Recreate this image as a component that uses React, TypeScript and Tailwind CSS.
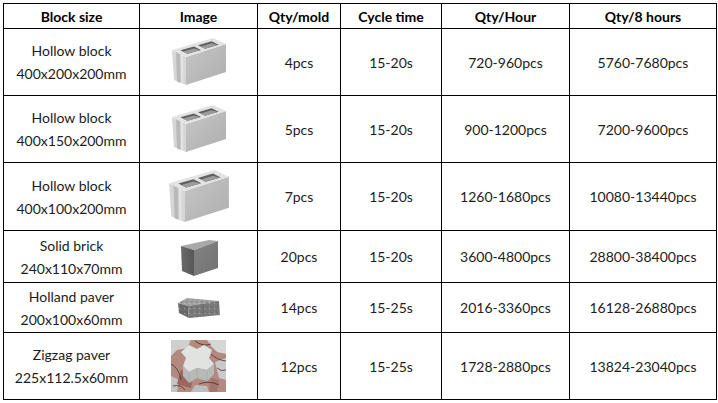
type Row = {
  name: string;
  size: string;
  img: 'hollow' | 'hollowWide' | 'solid' | 'holland' | 'zigzag';
  mold: string;
  cycle: string;
  hour: string;
  eight: string;
};

const rows: Row[] = [
  { name: 'Hollow block', size: '400x200x200mm', img: 'hollow', mold: '4pcs', cycle: '15-20s', hour: '720-960pcs', eight: '5760-7680pcs' },
  { name: 'Hollow block', size: '400x150x200mm', img: 'hollow', mold: '5pcs', cycle: '15-20s', hour: '900-1200pcs', eight: '7200-9600pcs' },
  { name: 'Hollow block', size: '400x100x200mm', img: 'hollowWide', mold: '7pcs', cycle: '15-20s', hour: '1260-1680pcs', eight: '10080-13440pcs' },
  { name: 'Solid brick', size: '240x110x70mm', img: 'solid', mold: '20pcs', cycle: '15-20s', hour: '3600-4800pcs', eight: '28800-38400pcs' },
  { name: 'Holland paver', size: '200x100x60mm', img: 'holland', mold: '14pcs', cycle: '15-25s', hour: '2016-3360pcs', eight: '16128-26880pcs' },
  { name: 'Zigzag paver', size: '225x112.5x60mm', img: 'zigzag', mold: '12pcs', cycle: '15-25s', hour: '1728-2880pcs', eight: '13824-23040pcs' },
];

const headers = ['Block size', 'Image', 'Qty/mold', 'Cycle time', 'Qty/Hour', 'Qty/8 hours'];

function HollowBlock({ w }: { w: number }) {
  return (
    <svg width={w} height={w * 48 / 56} viewBox="0 0 56 48">
      <defs>
        <linearGradient id="hbFront" x1="0" y1="0" x2="1" y2="1">
          <stop offset="0" stopColor="#c6c6c6" />
          <stop offset="1" stopColor="#aeaeae" />
        </linearGradient>
      </defs>
      {/* end face */}
      <polygon points="1,12 15,19 15,47 3,42" fill="#d6d6d6" />
      <polygon points="5,14 9,16 9.5,45 6,43.5" fill="#b9b9b9" />
      <polygon points="10,16.5 12,17.5 12.3,46 10.3,45.3" fill="#e4e4e4" />
      {/* front */}
      <polygon points="15,19 55,6 55,34 15,47" fill="url(#hbFront)" />
      {/* top */}
      <polygon points="1,12 42,0 55,6 15,19" fill="#e3e3e3" />
      <polygon points="9.4,12.3 23,8.4 30,11.9 16.4,15.8" fill="#5e5e5e" />
      <polygon points="12,13.6 23,10.4 29,12.3 16.4,15.8" fill="#9c9c9c" />
      <polygon points="27,7.2 40.6,3.2 47.6,6.7 34,10.7" fill="#5e5e5e" />
      <polygon points="29.6,8.5 40.6,5.2 46.6,7.1 34,10.7" fill="#9c9c9c" />
    </svg>
  );
}

function SolidBrick() {
  return (
    <svg width="40" height="40" viewBox="0 0 40 40">
      <defs>
        <linearGradient id="sbLeft" x1="0" y1="0" x2="1" y2="0">
          <stop offset="0" stopColor="#6a6a6a" />
          <stop offset="1" stopColor="#575757" />
        </linearGradient>
        <linearGradient id="sbFront" x1="0" y1="0" x2="1" y2="1">
          <stop offset="0" stopColor="#838383" />
          <stop offset="1" stopColor="#727272" />
        </linearGradient>
      </defs>
      <polygon points="2,9 30,3 39,4 15,13" fill="#a8a8a8" />
      <polygon points="2,9 15,13 15,39 3,34" fill="url(#sbLeft)" />
      <polygon points="15,13 39,4 39,31 15,39" fill="url(#sbFront)" />
    </svg>
  );
}

function HollandPaver() {
  return (
    <svg width="46" height="24" viewBox="0 0 46 24">
      <defs>
        <pattern id="speck" width="5" height="5" patternUnits="userSpaceOnUse">
          <circle cx="1" cy="1" r="0.5" fill="#3e3e3e" />
          <circle cx="3.5" cy="2.5" r="0.45" fill="#d0d0d0" />
          <circle cx="2" cy="4" r="0.4" fill="#4a4a4a" />
          <circle cx="4.3" cy="0.6" r="0.35" fill="#555" />
        </pattern>
      </defs>
      <polygon points="2,7 11,2 43,5 12,10" fill="#a4a4a4" />
      <polygon points="2,7 12,10 13,22 3,17" fill="#6c6c6c" />
      <polygon points="12,10 43,5 44,19 13,22" fill="#7c7c7c" />
      <polygon points="2,7 11,2 43,5 12,10" fill="url(#speck)" />
      <polygon points="2,7 12,10 13,22 3,17" fill="url(#speck)" />
      <polygon points="12,10 43,5 44,19 13,22" fill="url(#speck)" />
      <line x1="27" y1="7.6" x2="28" y2="20.6" stroke="#555" strokeWidth="0.6" />
    </svg>
  );
}

function ZigzagPhoto() {
  return (
    <svg width="55" height="52" viewBox="0 0 55 52">
      <rect width="55" height="52" fill="#b48a80" />
      <path d="M0 0H20L16 8L6 10L0 16Z" fill="#cfcfcf" />
      <path d="M36 0H55V14L46 12L40 6Z" fill="#d6d6d6" />
      <path d="M44 22L55 18V40L48 38Z" fill="#c9c9c9" />
      <path d="M0 36L8 40L6 52H0Z" fill="#c4c4c4" />
      <path d="M20 52L24 45L36 46L38 52Z" fill="#bdbdbd" />
      <path d="M10 30L22 34L20 48L6 44Z" fill="#9c665c" />
      <path d="M40 38L48 40L46 52H38Z" fill="#a5776c" />
      <path d="M24 1Q32 7 40 4M40 14Q46 20 55 21M0 24Q8 28 10 40M28 44Q38 40 48 45M2 46Q10 44 14 50M46 28Q50 32 55 30" stroke="#4a2e2a" strokeWidth="0.8" fill="none" />
      <path d="M10 12L18 5L26 9L33 5L41 10L38 18L43 24L36 30L26 28L18 32L12 26L15 18Z" fill="#e0e3e0" />
      <path d="M12 26L18 32L26 28L36 30L43 24L43 34L36 41L26 38L18 43L12 36Z" fill="#b7bbb7" />
      <path d="M26 28L26 38M18 32L18 43M36 30L36 41" stroke="#a2a6a2" strokeWidth="0.6" />
    </svg>
  );
}

function Picture({ kind }: { kind: Row['img'] }) {
  if (kind === 'hollow') return <HollowBlock w={56} />;
  if (kind === 'hollowWide') return <HollowBlock w={62} />;
  if (kind === 'solid') return <SolidBrick />;
  if (kind === 'holland') return <HollandPaver />;
  return <ZigzagPhoto />;
}

const cell = 'flex flex-col items-center justify-center border-r border-b border-black text-center';

export default function App() {
  return (
    <div className="w-[718px] h-[403px] bg-white pt-[3px] pl-[3px] font-['Lato',sans-serif] text-[14px] text-[#1c1c1c]">
      <div className="grid grid-cols-[136px_118px_83px_101px_128px_147px] grid-rows-[25px_67px_67px_68px_52px_50px_67px] w-fit border-l border-t border-black">
        {headers.map((h) => (
          <div key={h} className={`${cell} font-bold text-black`}>
            {h}
          </div>
        ))}
        {rows.map((r) => (
          <div key={r.size} className="contents">
            <div className={`${cell} leading-[23px]`}>
              <span>{r.name}</span>
              <span>{r.size}</span>
            </div>
            <div className={cell}>
              <Picture kind={r.img} />
            </div>
            <div className={cell}>{r.mold}</div>
            <div className={cell}>{r.cycle}</div>
            <div className={cell}>{r.hour}</div>
            <div className={cell}>{r.eight}</div>
          </div>
        ))}
      </div>
    </div>
  );
}
